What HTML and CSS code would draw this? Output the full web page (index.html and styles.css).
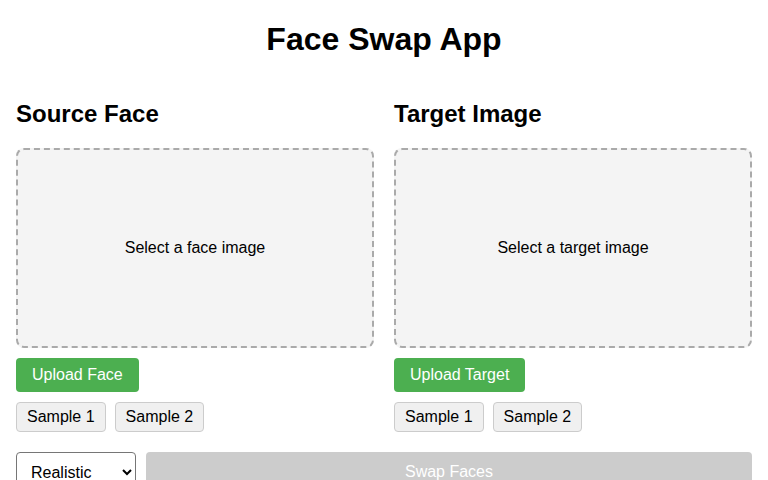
FILE: index.html
```html
<!DOCTYPE html>
<html lang="en">
<head>
  <meta charset="UTF-8">
  <meta name="viewport" content="width=device-width, initial-scale=1.0">
  <title>Face Swap App</title>
  <link rel="stylesheet" href="styles.css">
</head>
<body>
  <div class="container">
    <h1>Face Swap App</h1>
    <div class="panels">
      <div class="panel">
        <h2>Source Face</h2>
        <div class="drop-zone">Select a face image</div>
        <button class="upload-btn">Upload Face</button>
        <div class="samples">
          <button class="sample-btn">Sample 1</button>
          <button class="sample-btn">Sample 2</button>
        </div>
      </div>
      <div class="panel">
        <h2>Target Image</h2>
        <div class="drop-zone">Select a target image</div>
        <button class="upload-btn">Upload Target</button>
        <div class="samples">
          <button class="sample-btn">Sample 1</button>
          <button class="sample-btn">Sample 2</button>
        </div>
      </div>
    </div>
    <div class="controls">
      <select class="mode-select">
        <option>Realistic</option>
        <option>Cartoon</option>
      </select>
      <button class="swap-btn" disabled>Swap Faces</button>
    </div>
  </div>
</body>
</html>
```

FILE: styles.css
```css
body {
  font-family: "Liberation Sans", Arial, sans-serif;
  margin: 0;
  color: #000;
  background: #fff;
}

.container {
  padding: 0 16px;
}

h1 {
  text-align: center;
  font-size: 32px;
}

.panels {
  display: grid;
  grid-template-columns: 1fr 1fr;
  gap: 20px;
}

.panel h2 {
  font-size: 24px;
}

.drop-zone {
  height: 196px;
  border: 2px dashed #aaa;
  border-radius: 8px;
  background: #f4f4f4;
  display: flex;
  justify-content: center;
  align-items: center;
  font-size: 16px;
}

.upload-btn {
  margin-top: 10px;
  padding: 8px 16px;
  font-family: inherit;
  font-size: 16px;
  color: #fff;
  background: #4caf50;
  border: none;
  border-radius: 4px;
}

.samples {
  display: flex;
  gap: 9px;
  margin-top: 10px;
}

.sample-btn {
  padding: 5px 10px;
  font-family: inherit;
  font-size: 16px;
  color: #000;
  background: #f0f0f0;
  border: 1px solid #ccc;
  border-radius: 4px;
}

.controls {
  display: flex;
  gap: 10px;
  margin-top: 20px;
}

.mode-select {
  width: 120px;
  padding: 10px;
  font-family: inherit;
  font-size: 16px;
  border: 1px solid #767676;
  border-radius: 4px;
  background: #fff;
}

.swap-btn {
  flex: 1;
  padding: 10px 20px;
  font-family: inherit;
  font-size: 16px;
  color: #fff;
  background: #ccc;
  border: none;
  border-radius: 4px;
}
```
